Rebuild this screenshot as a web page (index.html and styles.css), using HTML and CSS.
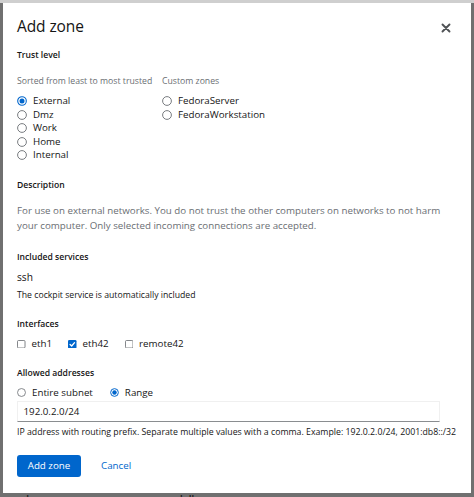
FILE: index.html
```html
<!DOCTYPE html>
<html lang="en">
<head>
<meta charset="utf-8">
<title>Add zone</title>
<link rel="stylesheet" href="styles.css">
</head>
<body>
<div class="modal">
  <header class="modal-header">
    <h1 class="modal-title">Add zone</h1>
    <button class="close" aria-label="Close">
      <svg viewBox="0 0 10 10" width="10" height="10"><path d="M1.5 1.5 L8.5 8.5 M8.5 1.5 L1.5 8.5" stroke="#4f5255" stroke-width="1.9" stroke-linecap="round"/></svg>
    </button>
  </header>

  <section class="group g-trust">
    <div class="label">Trust level</div>
    <div class="zones">
      <div class="zone-col">
        <div class="sub">Sorted from least to most trusted</div>
        <ul class="radio-list">
          <li class="opt"><svg class="ctl" viewBox="0 0 10 10"><circle cx="5" cy="5" r="4.3" fill="#fff" stroke="#0066cc" stroke-width="1.1"/><circle cx="5" cy="5" r="2.5" fill="#0066cc"/></svg>External</li>
          <li class="opt"><svg class="ctl" viewBox="0 0 10 10"><circle cx="5" cy="5" r="4.4" fill="#fff" stroke="#6a6e73" stroke-width="0.9"/></svg>Dmz</li>
          <li class="opt"><svg class="ctl" viewBox="0 0 10 10"><circle cx="5" cy="5" r="4.4" fill="#fff" stroke="#6a6e73" stroke-width="0.9"/></svg>Work</li>
          <li class="opt"><svg class="ctl" viewBox="0 0 10 10"><circle cx="5" cy="5" r="4.4" fill="#fff" stroke="#6a6e73" stroke-width="0.9"/></svg>Home</li>
          <li class="opt"><svg class="ctl" viewBox="0 0 10 10"><circle cx="5" cy="5" r="4.4" fill="#fff" stroke="#6a6e73" stroke-width="0.9"/></svg>Internal</li>
        </ul>
      </div>
      <div class="zone-col">
        <div class="sub">Custom zones</div>
        <ul class="radio-list">
          <li class="opt"><svg class="ctl" viewBox="0 0 10 10"><circle cx="5" cy="5" r="4.4" fill="#fff" stroke="#6a6e73" stroke-width="0.9"/></svg>FedoraServer</li>
          <li class="opt"><svg class="ctl" viewBox="0 0 10 10"><circle cx="5" cy="5" r="4.4" fill="#fff" stroke="#6a6e73" stroke-width="0.9"/></svg>FedoraWorkstation</li>
        </ul>
      </div>
    </div>
  </section>

  <section class="group g-desc">
    <div class="label">Description</div>
    <p class="desc">For use on external networks. You do not trust the other computers on networks to not harm your computer. Only selected incoming connections are accepted.</p>
  </section>

  <section class="group g-services">
    <div class="label">Included services</div>
    <div class="services">ssh</div>
    <div class="note">The cockpit service is automatically included</div>
  </section>

  <section class="group g-ifaces">
    <div class="label">Interfaces</div>
    <div class="inline-opts checks">
      <span class="opt"><svg class="box" viewBox="0 0 9 9"><rect x="0.5" y="0.5" width="8" height="8" rx="1.2" fill="#fff" stroke="#6a6e73" stroke-width="0.9"/></svg>eth1</span>
      <span class="opt"><svg class="box" viewBox="0 0 9 9"><rect x="0" y="0" width="9" height="9" rx="1.4" fill="#0066cc"/><path d="M2.2 4.7 L3.9 6.4 L6.9 2.8" fill="none" stroke="#fff" stroke-width="1.4" stroke-linecap="round" stroke-linejoin="round"/></svg>eth42</span>
      <span class="opt"><svg class="box" viewBox="0 0 9 9"><rect x="0.5" y="0.5" width="8" height="8" rx="1.2" fill="#fff" stroke="#6a6e73" stroke-width="0.9"/></svg>remote42</span>
    </div>
  </section>

  <section class="group g-addr">
    <div class="label">Allowed addresses</div>
    <div class="inline-opts radios">
      <span class="opt"><svg class="ctl small" viewBox="0 0 10 10"><circle cx="5" cy="5" r="4.4" fill="#fff" stroke="#6a6e73" stroke-width="0.9"/></svg>Entire subnet</span>
      <span class="opt"><svg class="ctl small" viewBox="0 0 10 10"><circle cx="5" cy="5" r="4.3" fill="#fff" stroke="#0066cc" stroke-width="1.1"/><circle cx="5" cy="5" r="2.5" fill="#0066cc"/></svg>Range</span>
    </div>
    <div class="text-input">192.0.2.0/24</div>
    <div class="helper">IP address with routing prefix. Separate multiple values with a comma. Example: 192.0.2.0/24, 2001:db8::/32</div>
  </section>

  <footer class="actions">
    <button class="btn-primary">Add zone</button>
    <button class="btn-link">Cancel</button>
  </footer>
</div>
<div class="behind"><span class="b1">udp</span><span>kdb</span></div>
</body>
</html>
```

FILE: styles.css
```css
html, body {
  margin: 0;
  padding: 0;
}
body {
  width: 474px;
  height: 497px;
  overflow: hidden;
  background: linear-gradient(#cfcfcf 0, #cfcfcf 3px, #707070 3px);
  font-family: "Open Sans", "Liberation Sans", sans-serif;
  color: #151515;
  padding-top: 3px;
  box-sizing: border-box;
}
.modal {
  width: 468px;
  height: 490px;
  margin-left: 3px;
  background: #fff;
  box-sizing: border-box;
  padding: 12px 14px 0 14px;
}
.modal-header {
  display: flex;
  justify-content: space-between;
  align-items: flex-start;
}
.modal-title {
  margin: 0;
  font-size: 15.5px;
  font-weight: 400;
  line-height: 22px;
  letter-spacing: -0.1px;
}
.close {
  border: 0;
  background: none;
  padding: 0;
  margin: 8px 6px 0 0;
  width: 10px;
  height: 10px;
  display: block;
}
.close svg { display: block; }

.label {
  font-size: 8.6px;
  font-weight: 600;
  line-height: 13px;
}
.g-trust { margin-top: 12px; }
.zones {
  display: grid;
  grid-template-columns: 145px auto;
  margin-top: 12.5px;
}
.sub {
  font-size: 8.7px;
  line-height: 13px;
  color: #6a6e73;
}
.radio-list {
  list-style: none;
  margin: 6.75px 0 0 0;
  padding: 0;
}
.opt {
  display: flex;
  align-items: center;
  gap: 6px;
  font-size: 9.75px;
  line-height: 13.5px;
}
.ctl {
  width: 10px;
  height: 10px;
  flex: none;
  display: block;
}
.ctl.small {
  width: 9px;
  height: 9px;
}
.box {
  width: 8.5px;
  height: 8.5px;
  flex: none;
  display: block;
}

.g-desc { margin-top: 16.75px; }
.desc {
  margin: 11.5px 0 0 0;
  font-size: 9.75px;
  line-height: 15.3px;
  color: #6a6e73;
  width: 436px;
}

.g-services { margin-top: 17.2px; }
.services {
  margin-top: 6.5px;
  font-size: 10.2px;
  line-height: 14px;
}
.note {
  margin-top: 4.4px;
  font-size: 8.7px;
  line-height: 12px;
}

.g-ifaces { margin-top: 17.5px; }
.inline-opts {
  display: flex;
  gap: 16px;
}
.checks { margin-top: 6.3px; }
.checks .opt { gap: 6px; }

.g-addr { margin-top: 16.5px; }
.radios { margin-top: 5.75px; gap: 17px; }
.radios .opt { gap: 6px; }
.text-input {
  margin-top: 1px;
  width: 423px;
  height: 21.3px;
  box-sizing: border-box;
  border: 1px solid #f0f0f0;
  border-bottom-color: #8a8d90;
  padding-left: 5.5px;
  font-size: 9.75px;
  line-height: 19.3px;
}
.helper {
  margin-top: 3.7px;
  font-size: 8.75px;
  line-height: 12px;
  white-space: nowrap;
}

.actions {
  margin-top: 17px;
  display: flex;
  align-items: center;
  gap: 20px;
}
.btn-primary {
  border: 0;
  border-radius: 3px;
  background: #0066cc;
  color: #fff;
  font-family: inherit;
  font-size: 9.75px;
  height: 22.3px;
  width: 64px;
  padding: 0;
}
.btn-link {
  border: 0;
  background: none;
  color: #0066cc;
  font-family: inherit;
  font-size: 9.75px;
  padding: 0;
}

.behind {
  height: 4px;
  overflow: hidden;
  display: flex;
  padding-left: 17px;
  font-size: 9.6px;
  line-height: 12px;
  font-weight: 600;
  color: #1a1a1a;
}
.b1 { width: 163px; }
```
